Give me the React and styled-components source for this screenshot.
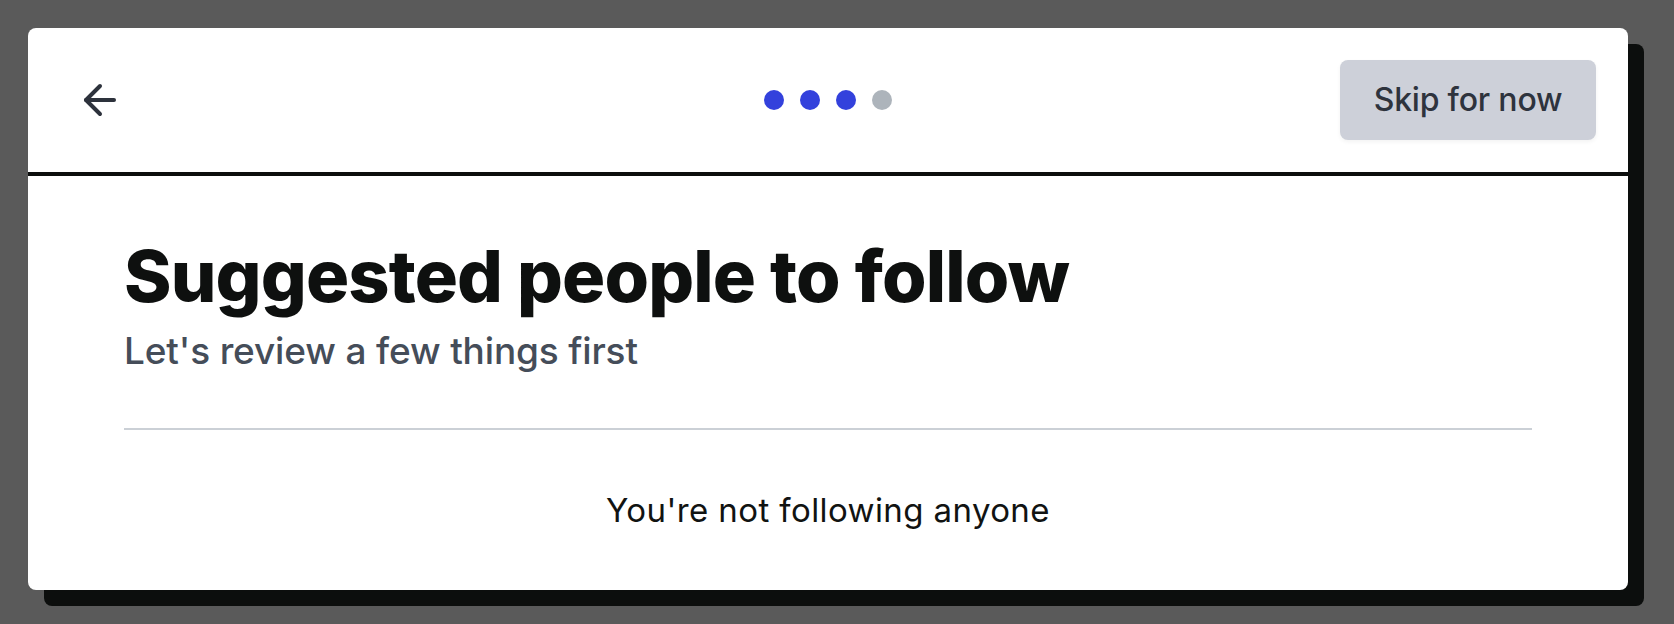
import styled, { createGlobalStyle } from "styled-components"
import { ArrowLeft } from "lucide-react"

const GlobalStyle = createGlobalStyle`
    html, body {
        margin: 0;
        padding: 0;
        background: #5a5a5a;
    }

    body {
        font-family: Inter, "Noto Sans", sans-serif;
    }

    * {
        box-sizing: border-box;
    }
`;

const Page = styled.div`
    padding: 28px 46px 0 28px;
    min-height: 624px;
`;

const Modal = styled.section`
    width: 1600px;
    background: #ffffff;
    border-radius: 8px;
    box-shadow: 16px 16px 0 #0c0e0d;
`;

const Header = styled.header`
    display: grid;
    grid-template-columns: 1fr auto 1fr;
    align-items: center;
    padding: 32px;
    border-bottom: 4px solid #0c0e0d;
`;

const BackButton = styled.button`
    justify-self: start;
    width: 80px;
    height: 80px;
    padding: 16px;
    border: none;
    background: transparent;
    color: #2d323c;
    display: flex;
    align-items: center;
    justify-content: center;
    cursor: pointer;
`;

const Steps = styled.div`
    display: flex;
    gap: 16px;
`;

const Dot = styled.span`
    width: 20px;
    height: 20px;
    border-radius: 50%;
    background: ${({ $done }) => ($done ? "#3341dc" : "#adb4bb")};
`;

const SkipButton = styled.button`
    justify-self: end;
    width: 256px;
    height: 80px;
    padding: 16px 0;
    border: none;
    border-radius: 8px;
    background: #cdd0d9;
    box-shadow: 0 2px 4px rgba(0, 0, 0, 0.05);
    font-family: Inter, "Noto Sans", sans-serif;
    font-size: 32px;
    line-height: 48px;
    font-weight: 500;
    letter-spacing: -0.2px;
    color: #2e333d;
    cursor: pointer;
`;

const Body = styled.div`
    padding: 60px 96px 0;
`;

const Title = styled.h1`
    margin: 0;
    font-size: 72px;
    line-height: 80px;
    font-weight: 800;
    letter-spacing: -0.85px;
    color: #0e100f;
`;

const Subtitle = styled.p`
    margin: 7px 0 0;
    font-size: 37px;
    line-height: 56px;
    font-weight: 500;
    letter-spacing: -0.15px;
    color: #454d59;
`;

const Divider = styled.hr`
    margin: 49px 0 0;
    border: none;
    height: 2px;
    background: #cbd0d6;
`;

const Empty = styled.p`
    margin: 0;
    padding: 56px 0;
    text-align: center;
    font-size: 33px;
    line-height: 48px;
    letter-spacing: 0.4px;
    color: #111312;
`;

export default function App() {
    const steps = [true, true, true, false]

    return (
        <>
            <GlobalStyle />
            <Page>
                <Modal>
                    <Header>
                        <BackButton aria-label="Back">
                            <ArrowLeft size={48} strokeWidth={2} />
                        </BackButton>
                        <Steps>
                            {steps.map((done, i) => (
                                <Dot key={i} $done={done} />
                            ))}
                        </Steps>
                        <SkipButton>Skip for now</SkipButton>
                    </Header>
                    <Body>
                        <Title>Suggested people to follow</Title>
                        <Subtitle>Let's review a few things first</Subtitle>
                        <Divider />
                        <Empty>You're not following anyone</Empty>
                    </Body>
                </Modal>
            </Page>
        </>
    )
}
